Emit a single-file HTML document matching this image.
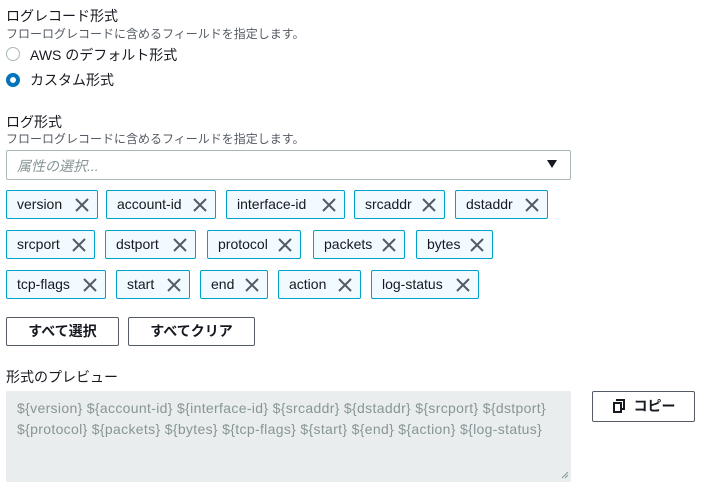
<!DOCTYPE html>
<html><head><meta charset="utf-8"><style>
body{margin:0;width:724px;height:485px;background:#fff;font-family:"Liberation Sans","Noto Sans CJK JP",sans-serif;color:#16191f;position:relative;overflow:hidden}
.a{position:absolute;white-space:nowrap}
.lbl{font-size:14px}
.desc{font-size:12px;color:#545b64}
.tok{position:absolute;height:27px;border:1px solid #00a1c9;background:#f1faff;border-radius:2px;font-size:14px;line-height:27px;padding-left:10px;box-sizing:content-box}
.tok svg{position:absolute;right:8px;top:7px}
.btn{position:absolute;border:1px solid #545b64;border-radius:2px;font-size:14px;font-weight:bold;text-align:center;line-height:26px;color:#16191f}
</style></head><body>
<div class="a lbl" style="left:6px;top:6px">ログレコード形式</div>
<div class="a desc" style="left:6px;top:25px">フローログレコードに含めるフィールドを指定します。</div>
<div class="a" style="left:6px;top:47px;width:12px;height:12px;border:1px solid #aab7b8;border-radius:50%"></div>
<div class="a" style="left:30px;top:45px;font-size:14px">AWS のデフォルト形式</div>
<div class="a" style="left:6px;top:73px;width:6px;height:6px;border:4px solid #0073bb;border-radius:50%"></div>
<div class="a" style="left:30px;top:70px;font-size:14px">カスタム形式</div>
<div class="a lbl" style="left:6px;top:112px">ログ形式</div>
<div class="a desc" style="left:6px;top:130px">フローログレコードに含めるフィールドを指定します。</div>
<div class="a" style="left:6px;top:150px;width:563px;height:28px;border:1px solid #aab7b8;border-radius:2px"></div>
<div class="a" style="left:17px;top:156px;font-size:14px;font-style:italic;color:#879596">属性の選択...</div>
<svg class="a" style="left:546px;top:159px" width="12" height="10"><path d="M1 1h10L6 9z" fill="#16191f"/></svg>
<div class="tok" style="left:6px;top:190px;width:80px">version<svg width="14" height="14"><path d="M1 1L13 13M13 1L1 13" stroke="#545b64" stroke-width="2"/></svg></div>
<div class="tok" style="left:106px;top:190px;width:98px">account-id<svg width="14" height="14"><path d="M1 1L13 13M13 1L1 13" stroke="#545b64" stroke-width="2"/></svg></div>
<div class="tok" style="left:226px;top:190px;width:107px">interface-id<svg width="14" height="14"><path d="M1 1L13 13M13 1L1 13" stroke="#545b64" stroke-width="2"/></svg></div>
<div class="tok" style="left:354px;top:190px;width:79px">srcaddr<svg width="14" height="14"><path d="M1 1L13 13M13 1L1 13" stroke="#545b64" stroke-width="2"/></svg></div>
<div class="tok" style="left:455px;top:190px;width:81px">dstaddr<svg width="14" height="14"><path d="M1 1L13 13M13 1L1 13" stroke="#545b64" stroke-width="2"/></svg></div>
<div class="tok" style="left:6px;top:230px;width:77px">srcport<svg width="14" height="14"><path d="M1 1L13 13M13 1L1 13" stroke="#545b64" stroke-width="2"/></svg></div>
<div class="tok" style="left:105px;top:230px;width:79px">dstport<svg width="14" height="14"><path d="M1 1L13 13M13 1L1 13" stroke="#545b64" stroke-width="2"/></svg></div>
<div class="tok" style="left:207px;top:230px;width:82px">protocol<svg width="14" height="14"><path d="M1 1L13 13M13 1L1 13" stroke="#545b64" stroke-width="2"/></svg></div>
<div class="tok" style="left:313px;top:230px;width:80px">packets<svg width="14" height="14"><path d="M1 1L13 13M13 1L1 13" stroke="#545b64" stroke-width="2"/></svg></div>
<div class="tok" style="left:416px;top:230px;width:65px">bytes<svg width="14" height="14"><path d="M1 1L13 13M13 1L1 13" stroke="#545b64" stroke-width="2"/></svg></div>
<div class="tok" style="left:6px;top:270px;width:88px">tcp-flags<svg width="14" height="14"><path d="M1 1L13 13M13 1L1 13" stroke="#545b64" stroke-width="2"/></svg></div>
<div class="tok" style="left:116px;top:270px;width:62px">start<svg width="14" height="14"><path d="M1 1L13 13M13 1L1 13" stroke="#545b64" stroke-width="2"/></svg></div>
<div class="tok" style="left:200px;top:270px;width:56px">end<svg width="14" height="14"><path d="M1 1L13 13M13 1L1 13" stroke="#545b64" stroke-width="2"/></svg></div>
<div class="tok" style="left:278px;top:270px;width:71px">action<svg width="14" height="14"><path d="M1 1L13 13M13 1L1 13" stroke="#545b64" stroke-width="2"/></svg></div>
<div class="tok" style="left:371px;top:270px;width:96px">log-status<svg width="14" height="14"><path d="M1 1L13 13M13 1L1 13" stroke="#545b64" stroke-width="2"/></svg></div>
<div class="btn" style="left:6px;top:317px;width:111px;height:27px">すべて選択</div>
<div class="btn" style="left:128px;top:317px;width:125px;height:27px">すべてクリア</div>
<div class="a lbl" style="left:6px;top:367px">形式のプレビュー</div>
<div class="a" style="left:6px;top:391px;width:565px;height:91px;background:#eaeded;border-radius:2px"></div>
<div class="a" style="left:17px;top:398px;font-size:14px;line-height:21px;color:#879596;letter-spacing:0.33px">${version} ${account-id} ${interface-id} ${srcaddr} ${dstaddr} ${srcport} ${dstport}<br>${protocol} ${packets} ${bytes} ${tcp-flags} ${start} ${end} ${action} ${log-status}</div>
<svg class="a" style="left:561px;top:471px" width="8" height="8"><path d="M7 1L1 7M7 4L4 7" stroke="#879596"/></svg>
<div class="btn" style="left:592px;top:391px;width:101px;height:29px;line-height:29px">
<svg style="vertical-align:-2px;margin-right:8px" width="14" height="14"><path d="M4 1h8v9h-2M2 4h7v9H2z" fill="none" stroke="#16191f" stroke-width="2"/></svg>コピー</div>
</body></html>
